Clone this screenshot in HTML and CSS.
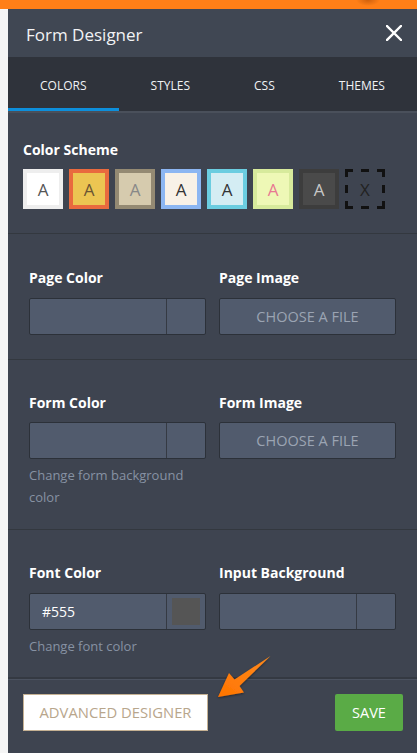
FILE: index.html
```html
<!DOCTYPE html>
<html>
<head>
<meta charset="utf-8">
<link rel="stylesheet" href="styles.css">
</head>
<body>
<div class="topbar"><span class="topshade"></span></div>
<div class="layout">
  <div class="gutter"></div>
  <div class="panel">
    <div class="header">
      <div class="title">Form Designer</div>
      <svg class="close" width="16" height="16" viewBox="0 0 16 16"><path d="M1 1L15 15M15 1L1 15" stroke="#fff" stroke-width="2.4" stroke-linecap="square"/></svg>
    </div>
    <div class="tabs">
      <div class="tab active">COLORS</div>
      <div class="tab">STYLES</div>
      <div class="tab">CSS</div>
      <div class="tab">THEMES</div>
    </div>
    <div class="section scheme">
      <div class="label">Color Scheme</div>
      <div class="swatches">
        <div class="sw s1">A</div>
        <div class="sw s2">A</div>
        <div class="sw s3">A</div>
        <div class="sw s4">A</div>
        <div class="sw s5">A</div>
        <div class="sw s6">A</div>
        <div class="sw s7">A</div>
        <div class="sw s8">
          <svg class="dash" width="40" height="40" viewBox="0 0 40 40">
            <path d="M1.5 8V1.5H8M32 1.5H38.5V8M38.5 32V38.5H32M8 38.5H1.5V32M16 1.5H24M16 38.5H24M1.5 16V24M38.5 16V24" fill="none" stroke="#111" stroke-width="3"/>
          </svg>
          <span>X</span>
        </div>
      </div>
    </div>
    <div class="section s-page">
      <div class="grid">
        <div class="field">
          <div class="label">Page Color</div>
          <div class="input"><div class="val"></div><div class="pick"></div></div>
        </div>
        <div class="field">
          <div class="label">Page Image</div>
          <div class="filebtn">CHOOSE A FILE</div>
        </div>
      </div>
    </div>
    <div class="section s-form">
      <div class="grid">
        <div class="field">
          <div class="label">Form Color</div>
          <div class="input"><div class="val"></div><div class="pick"></div></div>
          <div class="hint">Change form background color</div>
        </div>
        <div class="field">
          <div class="label">Form Image</div>
          <div class="filebtn">CHOOSE A FILE</div>
        </div>
      </div>
    </div>
    <div class="section s-font">
      <div class="grid">
        <div class="field">
          <div class="label">Font Color</div>
          <div class="input"><div class="val">#555</div><div class="pick"><span class="chip"></span></div></div>
          <div class="hint">Change font color</div>
        </div>
        <div class="field">
          <div class="label">Input Background</div>
          <div class="input"><div class="val"></div><div class="pick"></div></div>
        </div>
      </div>
    </div>
    <div class="footer">
      <div class="adv">ADVANCED DESIGNER</div>
      <div class="save">SAVE</div>
    </div>
  </div>
</div>
<svg class="arrow" width="70" height="56" viewBox="208 648 70 56">
  <defs>
    <linearGradient id="ag" x1="0" y1="1" x2="1" y2="0">
      <stop offset="0" stop-color="#ff7400"/>
      <stop offset="1" stop-color="#ff8a1c"/>
    </linearGradient>
    <filter id="sh" x="-20%" y="-20%" width="140%" height="140%">
      <feDropShadow dx="0" dy="1" stdDeviation="1" flood-color="#000" flood-opacity="0.45"/>
    </filter>
  </defs>
  <path d="M218 697 L229 673 L234.5 679.5 L270.5 656 L239.5 686 L244 692.5 Z" fill="url(#ag)" filter="url(#sh)" stroke-linejoin="round"/>
</svg>
</body>
</html>
```
FILE: styles.css
```css
html, body {
  margin: 0;
  padding: 0;
}
body {
  background: #f5f5f5;
  font-family: "Open Sans", "Liberation Sans", sans-serif;
  width: 417px;
  height: 753px;
  overflow: hidden;
  position: relative;
}
.topbar {
  height: 9px;
  background: #ff7f17;
  position: relative;
}
.topshade {
  position: absolute;
  left: 356px;
  top: -6px;
  width: 24px;
  height: 12px;
  border-radius: 50%;
  background: radial-gradient(ellipse at center, rgba(150,60,0,0.45), rgba(255,127,23,0) 70%);
}
.layout {
  display: flex;
  height: 744px;
}
.gutter {
  width: 8px;
  flex: none;
  background: #f5f5f5;
}
.panel {
  flex: 1;
  background: #3e4450;
  display: flex;
  flex-direction: column;
}
.header {
  height: 48px;
  background: #404753;
  display: flex;
  align-items: center;
  justify-content: space-between;
  padding: 0 15px 0 18px;
}
.title {
  color: #f2f3f5;
  font-size: 17px;
  font-weight: 400;
  margin-top: 2px;
}
.close {
  margin-top: 0;
}
.tabs {
  height: 54px;
  background: #2f333b;
  display: flex;
  border-bottom: 2px solid #4a505b;
}
.tab {
  flex: 1 1 auto;
  text-align: center;
  color: #f0f2f5;
  font-size: 12px;
  box-sizing: border-box;
  height: 54px;
  padding-top: 19px;
  line-height: 20px;
  border-bottom: 3px solid transparent;
}
.tab.active {
  border-bottom-color: #0d8fdb;
}
.section {
  border-bottom: 1px solid #33383f;
  padding: 34px 21px 24px;
}
.label {
  color: #ffffff;
  font-size: 14px;
  font-weight: 700;
  line-height: 20px;
}
.scheme {
  padding: 27px 15px 24px;
}
.swatches {
  display: flex;
  gap: 6px;
  margin-top: 9px;
}
.sw {
  width: 40px;
  height: 40px;
  box-sizing: border-box;
  border: 4px solid;
  display: flex;
  align-items: center;
  justify-content: center;
  font-size: 17px;
  line-height: 1;
  position: relative;
}
.s1 { border-color: #eeeeee; background: #ffffff; color: #555; }
.s2 { border-color: #e96a3e; background: #ecc552; color: #6b5532; }
.s3 { border-color: #948a73; background: #d6cbae; color: #888; }
.s4 { border-color: #8cb6f2; background: #f8f1e7; color: #333; }
.s5 { border-color: #6bcde0; background: #d4edf3; color: #333; }
.s6 { border-color: #d7ea9c; background: #eef8b6; color: #e87892; }
.s7 { border-color: #3d3d3d; background: #4a4a4a; color: #c7c7c7; }
.s8 { border: none; background: transparent; color: #222; }
.dash {
  position: absolute;
  left: 0;
  top: 0;
}
.grid {
  display: grid;
  grid-template-columns: 1fr 1fr;
  column-gap: 13px;
}
.field .label {
  margin-bottom: 10px;
}
.input {
  height: 37px;
  box-sizing: border-box;
  border: 1px solid #2c3139;
  border-radius: 2px;
  background: #515b6d;
  display: flex;
}
.val {
  flex: 1;
  color: #ffffff;
  font-size: 14px;
  line-height: 35px;
  padding-left: 12px;
}
.pick {
  width: 38px;
  border-left: 1px solid #353a43;
  display: flex;
  align-items: center;
  justify-content: center;
}
.chip {
  width: 28px;
  height: 27px;
  background: #555555;
}
.filebtn {
  height: 37px;
  box-sizing: border-box;
  border: 1px solid #2c3139;
  border-radius: 2px;
  background: #515b6d;
  color: #9ba4b3;
  font-size: 14.5px;
  line-height: 35px;
  text-align: center;
}
.hint {
  color: #8792a3;
  font-size: 13px;
  line-height: 22px;
  margin-top: 5px;
}
.s-page {
  padding-bottom: 24px;
}
.s-form {
  padding-top: 33px;
  padding-bottom: 21px;
}
.s-form .field .label { margin-bottom: 9px; }
.s-font {
  padding-top: 33px;
  padding-bottom: 20px;
  border-bottom: 2px solid #343942;
}
.footer {
  flex: 1;
  border-top: 1px solid #4b5260;
  display: flex;
  justify-content: space-between;
  align-items: flex-start;
  padding: 14px 14px 0 15px;
}
.adv {
  width: 185px;
  height: 37px;
  box-sizing: border-box;
  background: #ffffff;
  border: 1px solid #c5b193;
  color: #b8a68c;
  font-size: 14.8px;
  line-height: 35px;
  text-align: center;
}
.save {
  width: 68px;
  height: 37px;
  background: #5aab46;
  border-radius: 2px;
  color: #ffffff;
  font-size: 14.5px;
  line-height: 37px;
  text-align: center;
}
.arrow {
  position: absolute;
  left: 208px;
  top: 648px;
}
```
